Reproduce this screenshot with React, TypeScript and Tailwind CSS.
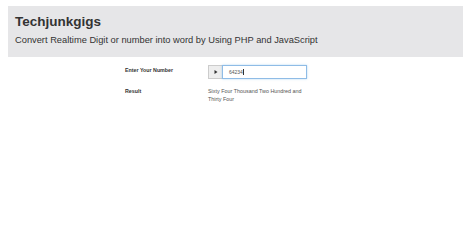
import React from "react";

const App = () => {
	return (
		<div className="h-[220px] w-[474px] bg-white pt-[6px] pl-[8px] pr-[11px] font-['Liberation_Sans',Arial,sans-serif] text-[#333]">
			<div className="h-[51px] bg-[#e6e6e8] pl-[7px] pt-[8.6px]">
				<h1 className="text-[13.5px] font-bold leading-none">Techjunkgigs</h1>
				<p className="mt-[8px] text-[9.3px] leading-none">
					Convert Realtime Digit or number into word by Using PHP and JavaScript
				</p>
			</div>

			<div className="ml-[117px] mt-[8px] flex flex-col">
				<div className="flex items-start">
					<label className="w-[83px] pt-[1px] text-[5.3px] font-bold leading-[8px] text-[#333]">
						Enter Your Number
					</label>
					<div className="flex h-[14px] w-[99px]">
						<span className="flex w-[14px] items-center justify-center border border-r-0 border-[#ccc] bg-[#eee]">
							<svg width="4" height="4" viewBox="0 0 4 4">
								<path d="M0.5 0 L3.5 2 L0.5 4 Z" fill="#333" />
							</svg>
						</span>
						<div className="flex flex-1 items-center border border-[#8fbce6] pl-[6px] shadow-[0_0_2px_rgba(102,175,233,0.5)]">
							<span className="text-[5px] leading-none text-[#555]">64234</span>
							<span className="ml-[0.5px] h-[6px] w-[0.7px] bg-[#333]" />
						</div>
					</div>
				</div>

				<div className="mt-[8px] flex items-start">
					<span className="w-[83px] text-[5.3px] font-bold leading-[8px] text-[#333]">Result</span>
					<p className="w-[110px] text-[5.4px] leading-[8px] text-[#555]">
						Sixty Four Thousand Two Hundred and
						<br />
						Thirty Four
					</p>
				</div>
			</div>
		</div>
	);
};

export default App;
